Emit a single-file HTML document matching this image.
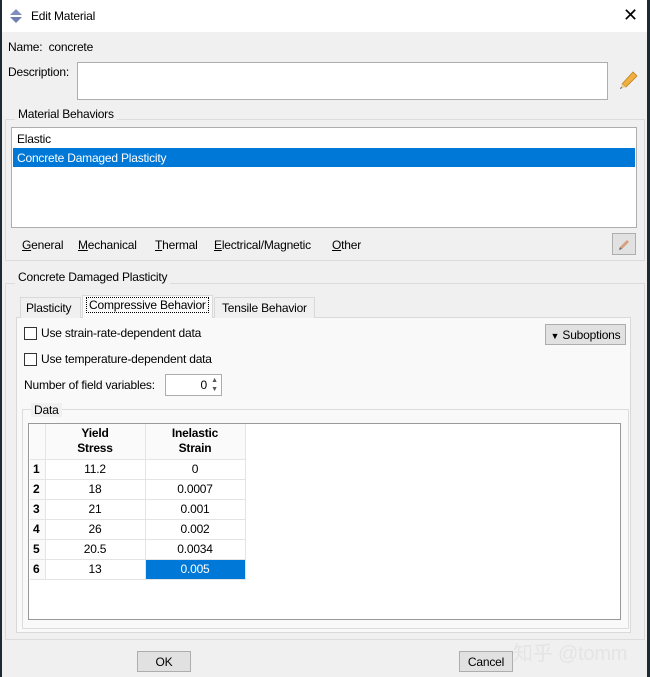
<!DOCTYPE html>
<html><head><meta charset="utf-8"><style>
*{box-sizing:border-box;margin:0;padding:0}
body{width:650px;height:677px;background:#1e2a33;font-family:"Liberation Sans",Arial,sans-serif;font-size:12px;color:#000;position:relative;overflow:hidden;letter-spacing:-0.2px}
.win{position:absolute;left:2px;top:0;width:645px;height:677px;background:#f0f0f0}
.a{position:absolute;white-space:nowrap}
.box{position:absolute;border:1px solid #dcdcdc}
.wb{position:absolute;background:#fff;border:1px solid #adadad}
.lab{position:absolute;background:#f0f0f0;padding:0 3px;white-space:nowrap}
.btn{position:absolute;background:#e1e1e1;border:1px solid #adadad;text-align:center}
.cb{position:absolute;width:13px;height:13px;border:1px solid #333;background:#fff}
table{border-collapse:collapse;position:absolute;left:1px;top:0px;table-layout:fixed}
td{height:20px;border-right:1px solid #e4e4e4;border-bottom:1px solid #e4e4e4;text-align:center;font-size:12px}
td.h{font-weight:bold;text-align:left;padding-left:3px;background:#fafafa}
th{height:35px;font-weight:bold;font-size:12px;line-height:15px;border-right:1px solid #e4e4e4;border-bottom:1px solid #e4e4e4;background:#fafafa}
u{text-decoration:underline}
</style></head><body>
<div class="win">
<div class="a" style="left:0;top:0;width:645px;height:32px;background:#fff"></div>
<svg class="a" style="left:7px;top:9px" width="14" height="14" viewBox="0 0 14 14"><path d="M7 0L13 6H1Z" fill="#7e8fbf"/><path d="M7 14L13 8H1Z" fill="#6f7fb0"/></svg>
<div class="a" style="left:29px;top:9px">Edit Material</div>
<div class="a" style="left:621px;top:5px;font-size:18px">✕</div>
<div class="a" style="left:6px;top:40px">Name:&nbsp;&nbsp;concrete</div>
<div class="a" style="left:6px;top:65px">Description:</div>
<div class="wb" style="left:75px;top:62px;width:531px;height:38px"></div>
<svg class="a" style="left:615px;top:69px" width="22" height="22" viewBox="0 0 22 22"><path d="M5 15L16 3L20 7L9 18Z" fill="#f0b040" stroke="#c08020" stroke-width="0.8"/><path d="M5 15L9 18L3 20Z" fill="#e8d0a0"/><path d="M3 20L4 18L5 19Z" fill="#333"/></svg>
<div class="box" style="left:3px;top:119px;width:640px;height:142px"></div>
<div class="lab" style="left:13px;top:107px">Material Behaviors</div>
<div class="wb" style="left:9px;top:127px;width:626px;height:101px"></div>
<div class="a" style="left:15px;top:132px">Elastic</div>
<div class="a" style="left:11px;top:148px;width:622px;height:19px;background:#0078d7;color:#fff;padding:3px 0 0 4px">Concrete Damaged Plasticity</div>
<div class="a" style="left:20px;top:238px"><u>G</u>eneral</div>
<div class="a" style="left:76px;top:238px"><u>M</u>echanical</div>
<div class="a" style="left:153px;top:238px"><u>T</u>hermal</div>
<div class="a" style="left:212px;top:238px"><u>E</u>lectrical/Magnetic</div>
<div class="a" style="left:330px;top:238px"><u>O</u>ther</div>
<div class="btn" style="left:610px;top:233px;width:24px;height:22px"><svg width="14" height="14" viewBox="0 0 14 14" style="margin-top:3px"><path d="M3 10L10 3L12 5L5 12Z" fill="#d9a080"/><path d="M3 10L5 12L2 13Z" fill="#666"/></svg></div>
<div class="box" style="left:3px;top:283px;width:640px;height:357px"></div>
<div class="lab" style="left:13px;top:270px">Concrete Damaged Plasticity</div>
<div class="box" style="left:14px;top:317px;width:615px;height:316px;background:#f9f9f9;border-color:#d9d9d9"></div>
<div class="a" style="left:18px;top:297px;width:61px;height:21px;border:1px solid #d9d9d9;border-bottom:none;background:#f0f0f0;padding:3px 0 0 5px">Plasticity</div>
<div class="a" style="left:80px;top:295px;width:131px;height:23px;border:1px solid #d9d9d9;border-bottom:none;background:#f9f9f9;padding:2px 0 0 3px"><span style="border:1px dotted #000;padding:0 2px">Compressive Behavior</span></div>
<div class="a" style="left:212px;top:297px;width:101px;height:21px;border:1px solid #d9d9d9;border-bottom:none;background:#f0f0f0;padding:3px 0 0 7px">Tensile Behavior</div>
<div class="cb" style="left:22px;top:327px"></div>
<div class="a" style="left:39px;top:326px">Use strain-rate-dependent data</div>
<div class="cb" style="left:22px;top:353px"></div>
<div class="a" style="left:39px;top:352px">Use temperature-dependent data</div>
<div class="btn" style="left:543px;top:324px;width:81px;height:21px;padding-top:3px"><span style="font-size:9px">▼</span> Suboptions</div>
<div class="a" style="left:22px;top:378px">Number of field variables:</div>
<div class="wb" style="left:163px;top:374px;width:57px;height:22px;text-align:right;padding:3px 14px 0 0">0</div>
<div class="a" style="left:207px;top:376px;width:11px;height:18px;font-size:7px;color:#555;line-height:9px;text-align:center">▲<br>▼</div>
<div class="box" style="left:20px;top:409px;width:607px;height:220px"></div>
<div class="lab" style="left:29px;top:403px">Data</div>
<div class="wb" style="left:26px;top:423px;width:593px;height:197px;border-color:#999">
<table>
<colgroup><col style="width:15px"><col style="width:100px"><col style="width:100px"></colgroup>
<tr><th></th><th>Yield<br>Stress</th><th>Inelastic<br>Strain</th></tr>
<tr><td class="h">1</td><td>11.2</td><td>0</td></tr>
<tr><td class="h">2</td><td>18</td><td>0.0007</td></tr>
<tr><td class="h">3</td><td>21</td><td>0.001</td></tr>
<tr><td class="h">4</td><td>26</td><td>0.002</td></tr>
<tr><td class="h">5</td><td>20.5</td><td>0.0034</td></tr>
<tr><td class="h">6</td><td>13</td><td style="background:#0078d7;color:#fff">0.005</td></tr>
</table></div>
<div class="btn" style="left:135px;top:651px;width:54px;height:21px;padding-top:3px">OK</div>
<div class="btn" style="left:457px;top:651px;width:54px;height:21px;padding-top:3px">Cancel</div>
<div class="a" style="left:511px;top:637px;font-size:20px;color:#e4e4e4;font-family:'Liberation Sans','Noto Sans CJK SC',sans-serif">知乎 @tomm</div>
</div>
</body></html>
